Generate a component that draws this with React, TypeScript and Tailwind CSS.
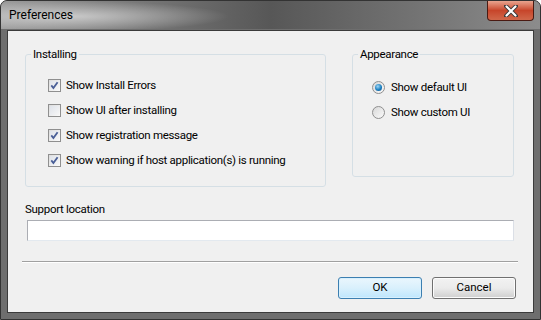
import React, { useState } from 'react';

const font = { fontFamily: 'Roboto, "Open Sans", "Noto Sans", sans-serif' };

// Classic Win7-style checkbox with a blue tick
const Check: React.FC<{ checked: boolean; label: string; onChange: () => void }> = ({ checked, label, onChange }) => (
  <label className="flex items-center gap-[5px] cursor-default select-none" onClick={onChange}>
    <span className="w-[13px] h-[13px] border border-[#8f8f8f] bg-gradient-to-br from-[#dcdcdc] to-[#fbfbfb] flex items-center justify-center">
      <span className="w-[9px] h-[9px] bg-gradient-to-br from-[#dfe3ea] to-[#f6f6f6] flex items-center justify-center">
        {checked && (
          <svg width="9" height="9" viewBox="0 0 9 9">
            <path d="M1.3 4.4 L3.4 7 L7.6 1.2" fill="none" stroke="#4a5f97" strokeWidth="1.8" />
          </svg>
        )}
      </span>
    </span>
    <span className="text-[11.5px] tracking-[-0.3px] text-black leading-none">{label}</span>
  </label>
);

const Radio: React.FC<{ checked: boolean; label: string; onChange: () => void }> = ({ checked, label, onChange }) => (
  <label className="flex items-center gap-[6px] cursor-default select-none" onClick={onChange}>
    <span className="w-[13px] h-[13px] rounded-full border border-[#8f8f8f] bg-gradient-to-br from-[#d8d8d8] to-[#fafafa] flex items-center justify-center">
      {checked && (
        <span className="w-[7px] h-[7px] rounded-full bg-[radial-gradient(circle_at_40%_35%,#9fd6f5,#1a7fc0_55%,#0c4c86)]" />
      )}
    </span>
    <span className="text-[11.5px] tracking-[-0.3px] text-black leading-none">{label}</span>
  </label>
);

const GroupBox: React.FC<{ title: string; className: string; children: React.ReactNode }> = ({ title, className, children }) => (
  <div className={`relative border border-[#d5dfe5] rounded-[3px] ${className}`}>
    <span className="absolute -top-[9px] left-[5px] px-[2px] bg-[#f0f0f0] text-[11.5px] tracking-[-0.3px] text-black leading-[16px]">{title}</span>
    {children}
  </div>
);

export default function App() {
  const [checks, setChecks] = useState([true, false, true, true]);
  const [ui, setUi] = useState<'default' | 'custom'>('default');
  const labels = [
    'Show Install Errors',
    'Show UI after installing',
    'Show registration message',
    'Show warning if host application(s) is running',
  ];

  return (
    <div style={font} className="w-[541px] h-[320px] bg-white">
      <div className="w-full h-full flex flex-col rounded-t-[7px] border border-[#333] bg-[#6e6e6e] overflow-hidden">
        {/* title bar */}
        <div className="h-[28px] relative flex items-center bg-gradient-to-r from-[#9c9c9c] via-[#575757] to-[#8c8c8c]">
          <div className="absolute left-0 top-0 h-full w-[230px] bg-[radial-gradient(ellipse_at_30%_55%,rgba(255,255,255,0.55),rgba(255,255,255,0)_70%)]" />
          <span className="relative pl-[8px] text-[12px] text-black">Preferences</span>
          <div className="absolute right-[6px] top-0 w-[47px] h-[20px] rounded-b-[4px] border border-t-0 border-[#4a1a12] bg-gradient-to-b from-[#e8a48f] via-[#c7452a] to-[#d0674a] flex items-center justify-center">
            <svg width="14" height="12" viewBox="0 0 14 12">
              <path d="M2 1 L12 11 M12 1 L2 11" stroke="#3a3a3a" strokeWidth="4" strokeLinecap="round" />
              <path d="M2.5 1.5 L11.5 10.5 M11.5 1.5 L2.5 10.5" stroke="#ffffff" strokeWidth="2.2" strokeLinecap="round" />
            </svg>
          </div>
        </div>
        {/* client area */}
        <div className="flex-1 px-[6px] pb-[6px] pt-[1px]">
          <div className="h-full border border-[#3b3b3b] bg-[#f0f0f0] pt-[23px] px-[17px]">
            <div className="flex items-start gap-[26px]">
              <GroupBox title="Installing" className="w-[301px] h-[133px]">
                <div className="flex flex-col gap-[12px] pl-[22px] pt-[24px]">
                  {labels.map((l, i) => (
                    <Check
                      key={l}
                      label={l}
                      checked={checks[i]}
                      onChange={() => setChecks(c => c.map((v, j) => (j === i ? !v : v)))}
                    />
                  ))}
                </div>
              </GroupBox>
              <GroupBox title="Appearance" className="w-[162px] h-[123px]">
                <div className="flex flex-col gap-[12px] pl-[19px] pt-[26px]">
                  <Radio label="Show default UI" checked={ui === 'default'} onChange={() => setUi('default')} />
                  <Radio label="Show custom UI" checked={ui === 'custom'} onChange={() => setUi('custom')} />
                </div>
              </GroupBox>
            </div>
            <div className="mt-[14px] text-[11.5px] tracking-[-0.3px] text-black leading-[16px]">Support location</div>
            <input className="mt-[2px] ml-[2px] w-[487px] h-[21px] bg-white border border-[#abadb3] border-b-[#e3e9ef] border-r-[#dbdfe6] outline-none text-[12px] px-[2px]" />
            <div className="mt-[20px] -ml-[3px] w-[496px] h-[2px] border-t border-[#a0a0a0] border-b border-b-white" />
            <div className="flex justify-end gap-[10px] mt-[14px]">
              <button className="w-[84px] h-[22px] rounded-[3px] border border-[#3c7fb1] bg-gradient-to-b from-[#eaf6fd] via-[#d9f0fc] to-[#bee6fd] text-[11.5px] text-black shadow-[inset_0_0_0_1px_#d8f0fd]">
                OK
              </button>
              <button className="w-[84px] h-[22px] rounded-[3px] border border-[#707070] bg-gradient-to-b from-[#f2f2f2] via-[#ebebeb] to-[#cfcfcf] text-[11.5px] text-black shadow-[inset_0_0_0_1px_#fcfcfc]">
                Cancel
              </button>
            </div>
          </div>
        </div>
      </div>
    </div>
  );
}
